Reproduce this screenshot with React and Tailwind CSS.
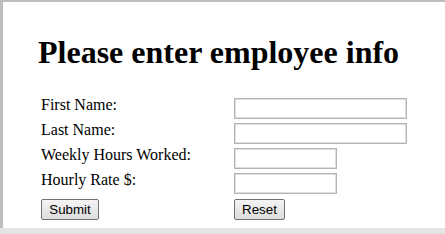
import React from "react";

function Field({ label, wide }) {
  return (
    <div className="flex h-[25px]">
      <div className="w-[193px] pt-[2px] text-[16px] leading-[18px]">{label}</div>
      <div className="pt-[2px]">
        <input
          type="text"
          className={`${wide ? "w-[173px]" : "w-[103px]"} h-[21px] border border-[#b4b4b4] shadow-[inset_0_0_0_1px_#dedede] bg-white outline-none`}
        />
      </div>
    </div>
  );
}

function Btn({ children, w }) {
  return (
    <button
      type="button"
      className={`${w} h-[21px] border border-[#707070] rounded-[2px] bg-gradient-to-b from-[#f4f4f4] to-[#dcdcdc] text-[13.33px] leading-none text-black`}
      style={{ fontFamily: '"Liberation Sans", Arial, sans-serif' }}
    >
      {children}
    </button>
  );
}

export default function App() {
  return (
    <div className="w-[445px] h-[234px] bg-[#e4e4e4] flex flex-col overflow-hidden">
      <div className="h-[2px] bg-[#bdbdbd]" />
      <div className="flex h-[226px]">
        <div className="w-[3px] bg-[#bdbdbd]" />
        <div
          className="flex-1 bg-white text-black"
          style={{ fontFamily: '"Liberation Serif", "Times New Roman", serif' }}
        >
          <h1 className="mt-[32px] pl-[35px] text-[32px] leading-[36px] font-bold">
            Please enter employee info
          </h1>
          <div className="mt-[24px] pl-[38px] flex flex-col">
            <Field label="First Name:" wide />
            <Field label="Last Name:" wide />
            <Field label="Weekly Hours Worked:" />
            <Field label="Hourly Rate $:" />
            <div className="flex h-[25px] pt-[3px]">
              <div className="w-[193px]">
                <Btn w="w-[58px]">Submit</Btn>
              </div>
              <div>
                <Btn w="w-[51px]">Reset</Btn>
              </div>
            </div>
          </div>
        </div>
      </div>
    </div>
  );
}
